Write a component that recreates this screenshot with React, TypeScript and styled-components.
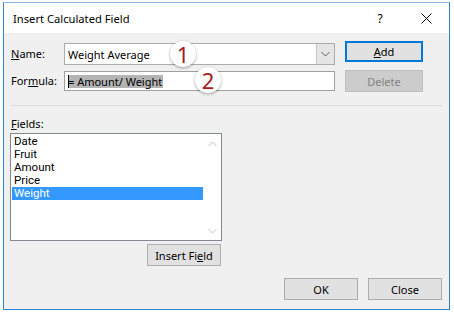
import React from "react";
import styled, { createGlobalStyle } from "styled-components";

const Global = createGlobalStyle`
  html, body { margin: 0; padding: 0; background: #ffffff; }
  body { font-family: "Noto Sans", "Open Sans", sans-serif; font-size: 11px; color: #000; }
  * { box-sizing: border-box; }
`;

const Window = styled.div`
  margin: 2px 0 0 3px;
  width: 447px;
  height: 308px;
  border: 1px solid #2e84d6;
  border-top-color: #8ab8e6;
  display: flex;
  flex-direction: column;
  background: #f0f0f0;
`;

const TitleBar = styled.div`
  height: 30px;
  background: #ffffff;
  display: flex;
  align-items: center;
  padding-left: 9px;
`;

const Title = styled.div`
  flex: 1;
  font-size: 11.2px;
  color: #000;
`;

const TitleButton = styled.div`
  width: 46px;
  height: 30px;
  display: flex;
  align-items: center;
  justify-content: center;
  font-size: 12px;
`;

const Body = styled.div`
  flex: 1;
  display: flex;
  flex-direction: column;
  padding: 8px 7px 8px 6px;
  position: relative;
`;

const TopSection = styled.div`
  display: flex;
  gap: 10px;
`;

const FieldRows = styled.div`
  display: grid;
  grid-template-columns: 54px 271px;
  row-gap: 4px;
  margin-top: 1px;
  align-items: center;
`;

const Label = styled.div`
  padding-left: 1px;
  line-height: 16px;
`;

const U = styled.span`
  text-decoration: underline;
  text-underline-offset: 1px;
`;

const Combo = styled.div`
  height: 22px;
  border: 1px solid #acacac;
  background: #fff;
  display: flex;
  align-items: center;
`;

const ComboText = styled.div`
  flex: 1;
  padding-left: 3px;
`;

const ComboButton = styled.div`
  width: 18px;
  height: 20px;
  background: #e5e5e5;
  border-left: 1px solid #c8c8c8;
  display: flex;
  align-items: center;
  justify-content: center;
`;

const Edit = styled.div`
  height: 20px;
  border: 1px solid #a0a0a0;
  background: #fff;
  display: flex;
  align-items: center;
  padding-left: 3px;
`;

const Selection = styled.span`
  background: #b4b4b4;
  line-height: 13px;
  position: relative;
  padding-right: 1px;
`;

const Caret = styled.span`
  position: absolute;
  left: 0;
  top: 0;
  width: 1px;
  height: 13px;
  background: #000;
`;

const ButtonCol = styled.div`
  display: flex;
  flex-direction: column;
  gap: 8px;
`;

const Button = styled.div<{ $w?: number; $default?: boolean; $disabled?: boolean }>`
  width: ${(p) => p.$w ?? 78}px;
  height: ${(p) => (p.$default ? 21 : 22)}px;
  display: flex;
  align-items: center;
  justify-content: center;
  background: ${(p) => (p.$disabled ? "#cccccc" : "#e1e1e1")};
  border: ${(p) =>
    p.$default ? "2px solid #0078d7" : p.$disabled ? "1px solid #bfbfbf" : "1px solid #adadad"};
  color: ${(p) => (p.$disabled ? "#838383" : "#000")};
`;

const Separator = styled.div`
  height: 1px;
  background: #dadada;
  margin: 13px 0 0 1px;
`;

const FieldsLabel = styled.div`
  margin-top: 10px;
  padding-left: 1px;
  line-height: 16px;
`;

const ListBox = styled.div`
  margin-top: 1px;
  width: 212px;
  height: 108px;
  border: 1px solid #828790;
  background: #fff;
  display: flex;
  padding: 1px 0 1px 1px;
`;

const Items = styled.div`
  width: 191px;
  display: flex;
  flex-direction: column;
`;

const Item = styled.div<{ $sel?: boolean }>`
  height: 13px;
  line-height: 13px;
  padding-left: 2px;
  font-family: Roboto, "Noto Sans", sans-serif;
  font-size: 11.5px;
  overflow: hidden;
  background: ${(p) => (p.$sel ? "#3399ff" : "transparent")};
  color: ${(p) => (p.$sel ? "#fff" : "#000")};
`;

const ScrollBar = styled.div`
  flex: 1;
  display: flex;
  flex-direction: column;
  justify-content: space-between;
  align-items: center;
  padding: 6px 0 5px;
`;

const InsertRow = styled.div`
  width: 211px;
  display: flex;
  justify-content: flex-end;
  margin-top: 3px;
`;

const BottomRow = styled.div`
  display: flex;
  justify-content: flex-end;
  gap: 10px;
  margin-top: 12px;
`;

const Badge = styled.div<{ $x: number; $y: number }>`
  position: absolute;
  left: ${(p) => p.$x}px;
  top: ${(p) => p.$y}px;
  width: 26px;
  height: 26px;
  border-radius: 50%;
  background: #fff;
  box-shadow: 0 1px 3px rgba(0, 0, 0, 0.35);
  display: flex;
  align-items: center;
  justify-content: center;
  color: #a11b1b;
  font-size: 22px;
  line-height: 1;
`;

const Chevron = ({ up, color }: { up?: boolean; color: string }) => (
  <svg width="9" height="6" viewBox="0 0 9 6">
    <path
      d={up ? "M0.5 5 L4.5 1 L8.5 5" : "M0.5 1 L4.5 5 L8.5 1"}
      fill="none"
      stroke={color}
      strokeWidth="1"
    />
  </svg>
);

export default function App() {
  return (
    <>
      <Global />
      <Window>
        <TitleBar>
          <Title>Insert Calculated Field</Title>
          <TitleButton>?</TitleButton>
          <TitleButton>
            <svg width="11" height="11" viewBox="0 0 11 11">
              <path d="M0.5 0.5 L10.5 10.5 M10.5 0.5 L0.5 10.5" stroke="#000" strokeWidth="1" />
            </svg>
          </TitleButton>
        </TitleBar>
        <Body>
          <TopSection>
            <FieldRows>
              <Label>
                <U>N</U>ame:
              </Label>
              <Combo>
                <ComboText>Weight Average</ComboText>
                <ComboButton>
                  <Chevron color="#606060" />
                </ComboButton>
              </Combo>
              <Label>
                For<U>m</U>ula:
              </Label>
              <Edit>
                <Selection>
                  <Caret />= Amount/ Weight
                </Selection>
              </Edit>
            </FieldRows>
            <ButtonCol>
              <Button $default>
                <span>
                  <U>A</U>dd
                </span>
              </Button>
              <Button $disabled>Delete</Button>
            </ButtonCol>
          </TopSection>
          <Separator />
          <FieldsLabel>
            <U>F</U>ields:
          </FieldsLabel>
          <ListBox>
            <Items>
              <Item>Date</Item>
              <Item>Fruit</Item>
              <Item>Amount</Item>
              <Item>Price</Item>
              <Item $sel>Weight</Item>
            </Items>
            <ScrollBar>
              <Chevron up color="#c2c2c2" />
              <Chevron color="#c2c2c2" />
            </ScrollBar>
          </ListBox>
          <InsertRow>
            <Button $w={74}>
              <span>
                Insert Fi<U>e</U>ld
              </span>
            </Button>
          </InsertRow>
          <BottomRow>
            <Button $w={74}>OK</Button>
            <Button $w={74}>Close</Button>
          </BottomRow>
          <Badge $x={166} $y={8}>1</Badge>
          <Badge $x={191} $y={34}>2</Badge>
        </Body>
      </Window>
    </>
  );
}
